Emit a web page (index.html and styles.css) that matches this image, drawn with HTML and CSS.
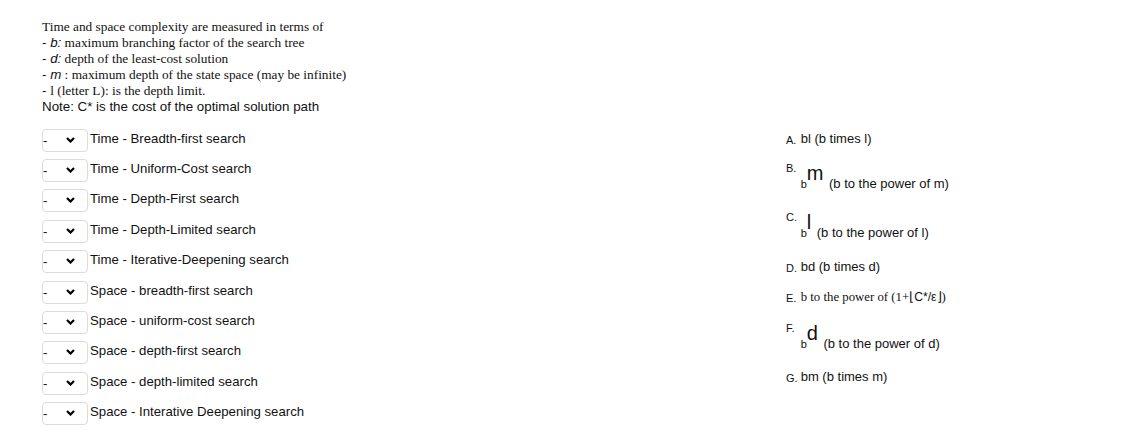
FILE: index.html
```html
<!DOCTYPE html>
<html lang="en">
<head>
    <meta charset="UTF-8">
    <meta name="viewport" content="width=device-width, initial-scale=1.0">
    <title>Search complexity - matching</title>
    <link rel="stylesheet" href="styles.css">
</head>
<body>

    <div class="question">
        <!-- Texte de la question -->
        <div class="prompt">
            <div>Time and space complexity are measured in terms of</div>
            <div><span class="sans">- </span><i class="sans">b:</i> maximum branching factor of the search tree</div>
            <div><span class="sans">- </span><i class="sans">d:</i> depth of the least-cost solution</div>
            <div><span class="sans">- </span><i class="sans">m</i> : maximum depth of the state space (may be infinite)</div>
            <div><span class="sans">- </span>l (letter L): is the depth limit.</div>
            <div class="note">Note: C* is the cost of the optimal solution path</div>
        </div>

        <div class="match">
            <!-- Liste des sous-questions -->
            <div class="stems">
                <div class="stem"><span class="choice"><select><option>-</option></select><svg class="chev" viewBox="0 0 9 6"><polyline points="1,1 4.5,4.5 8,1"/></svg></span><label>Time - Breadth-first search</label></div>
                <div class="stem"><span class="choice"><select><option>-</option></select><svg class="chev" viewBox="0 0 9 6"><polyline points="1,1 4.5,4.5 8,1"/></svg></span><label>Time - Uniform-Cost search</label></div>
                <div class="stem"><span class="choice"><select><option>-</option></select><svg class="chev" viewBox="0 0 9 6"><polyline points="1,1 4.5,4.5 8,1"/></svg></span><label>Time - Depth-First search</label></div>
                <div class="stem"><span class="choice"><select><option>-</option></select><svg class="chev" viewBox="0 0 9 6"><polyline points="1,1 4.5,4.5 8,1"/></svg></span><label>Time - Depth-Limited search</label></div>
                <div class="stem"><span class="choice"><select><option>-</option></select><svg class="chev" viewBox="0 0 9 6"><polyline points="1,1 4.5,4.5 8,1"/></svg></span><label>Time - Iterative-Deepening search</label></div>
                <div class="stem"><span class="choice"><select><option>-</option></select><svg class="chev" viewBox="0 0 9 6"><polyline points="1,1 4.5,4.5 8,1"/></svg></span><label>Space - breadth-first search</label></div>
                <div class="stem"><span class="choice"><select><option>-</option></select><svg class="chev" viewBox="0 0 9 6"><polyline points="1,1 4.5,4.5 8,1"/></svg></span><label>Space - uniform-cost search</label></div>
                <div class="stem"><span class="choice"><select><option>-</option></select><svg class="chev" viewBox="0 0 9 6"><polyline points="1,1 4.5,4.5 8,1"/></svg></span><label>Space - depth-first search</label></div>
                <div class="stem"><span class="choice"><select><option>-</option></select><svg class="chev" viewBox="0 0 9 6"><polyline points="1,1 4.5,4.5 8,1"/></svg></span><label>Space - depth-limited search</label></div>
                <div class="stem"><span class="choice"><select><option>-</option></select><svg class="chev" viewBox="0 0 9 6"><polyline points="1,1 4.5,4.5 8,1"/></svg></span><label>Space - Interative Deepening search</label></div>
            </div>

            <!-- Liste des reponses -->
            <div class="answers">
                <div class="answer"><span class="letter">A.</span><span class="text">bl (b times l)</span></div>
                <div class="answer power"><span class="letter">B.</span><span class="text"><span class="base">b</span><sup>m</sup>(b to the power of m)</span></div>
                <div class="answer power"><span class="letter">C.</span><span class="text"><span class="base">b</span><sup>l</sup>(b to the power of l)</span></div>
                <div class="answer"><span class="letter">D.</span><span class="text">bd (b times d)</span></div>
                <div class="answer"><span class="letter">E.</span><span class="text serif">b to the power of (1+⌊<span class="sans">C*/ε</span>⌋)</span></div>
                <div class="answer power"><span class="letter">F.</span><span class="text"><span class="base">b</span><sup>d</sup>(b to the power of d)</span></div>
                <div class="answer"><span class="letter">G.</span><span class="text">bm (b times m)</span></div>
            </div>
        </div>
    </div>

</body>
</html>
```

FILE: styles.css
```css
/* Style general */
body {
    margin: 0;
    padding: 19px 0 0 42px;
    background: #fff;
    color: #111;
    font-family: "Liberation Sans", Arial, sans-serif;
    font-size: 13px;
}
.sans {
    font-family: "Liberation Sans", Arial, sans-serif;
}
.serif {
    font-family: "Liberation Serif", "Times New Roman", serif;
}

/* Enonce */
.prompt {
    font-family: "Liberation Serif", "Times New Roman", serif;
    font-size: 13.33px;
    line-height: 16px;
}
.prompt i {
    font-style: italic;
}
.note {
    font-family: "Liberation Sans", Arial, sans-serif;
    line-height: 15.7px;
}

/* Grille des associations */
.match {
    display: grid;
    grid-template-columns: 744px auto;
    margin-top: 14px;
}
.stems {
    display: flex;
    flex-direction: column;
    gap: 7.4px;
}
.stem {
    display: flex;
    align-items: flex-start;
    height: 23px;
}
.choice {
    position: relative;
    display: block;
}
select {
    appearance: none;
    -webkit-appearance: none;
    display: block;
    width: 46px;
    height: 23px;
    margin: 0;
    padding: 0;
    border: 1px solid #dcdcdc;
    border-radius: 4px;
    background: #fff;
    color: #111;
    font-family: "Liberation Sans", Arial, sans-serif;
    font-size: 13px;
}
/* chevron du menu deroulant */
.chev {
    position: absolute;
    left: 23.5px;
    top: 8px;
    width: 9px;
    height: 6px;
    pointer-events: none;
}
.chev polyline {
    fill: none;
    stroke: #000;
    stroke-width: 2.2;
}
.stem label {
    margin-left: 2px;
    padding-top: 1px;
    line-height: 17px;
    font-size: 13.2px;
}

/* Reponses */
.answers {
    display: flex;
    flex-direction: column;
    gap: 16.5px;
    padding-top: 2px;
}
.answer {
    display: flex;
    align-items: baseline;
    height: 15px;
    line-height: 15px;
}
.letter {
    width: 14.7px;
    flex: none;
    font-size: 11px;
    position: relative;
    top: 1px;
}
.answer .serif {
    font-size: 12.8px;
}
.answer .serif .sans {
    font-size: 12.2px;
}
.power {
    align-items: flex-start;
    height: 31px;
}
.power + .power {
    margin-top: 1.5px;
}
.power .letter {
    top: 0;
    line-height: 13px;
}
.power .text {
    padding-top: 1px;
}
.base {
    font-size: 11px;
}
sup {
    font-size: 20px;
    line-height: 20px;
    vertical-align: 8px;
    margin-right: 5.5px;
}
```
